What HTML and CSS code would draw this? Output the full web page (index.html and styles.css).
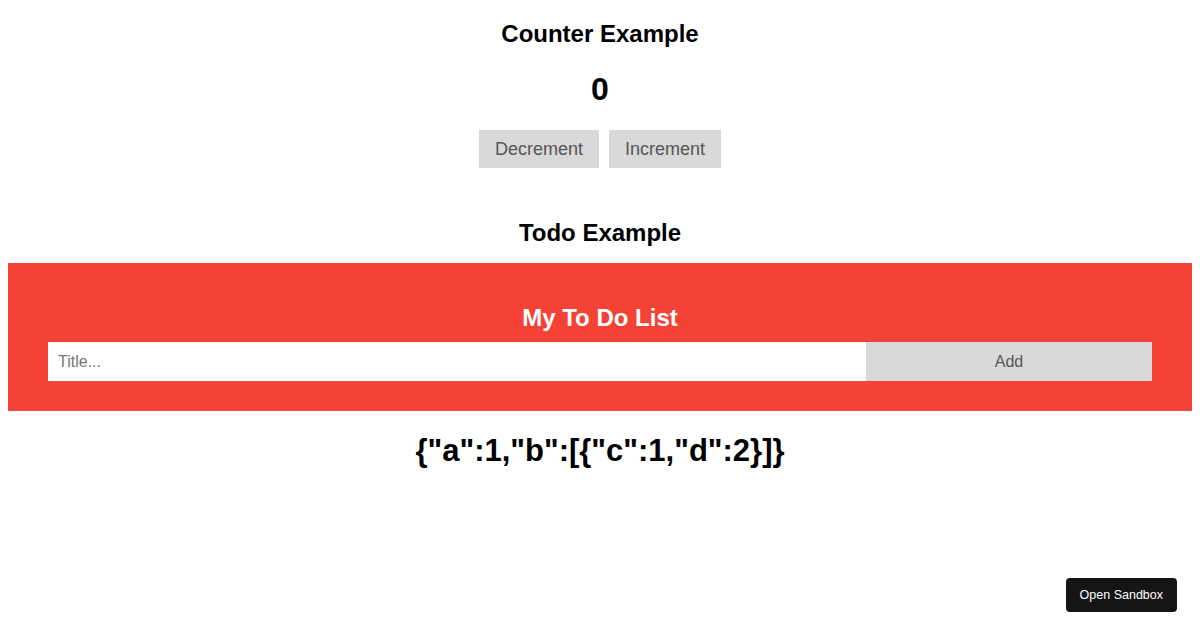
FILE: index.html
```html
<!DOCTYPE html>
<html>
<head>
<meta charset="utf-8">
<link rel="stylesheet" href="styles.css">
</head>
<body>
<div class="app">
  <h2 class="title">Counter Example</h2>
  <h1 class="count">0</h1>
  <div class="counter-btns">
    <button class="btn">Decrement</button>
    <button class="btn">Increment</button>
  </div>
  <h2 class="title todo-title">Todo Example</h2>
  <div class="header">
    <h2 class="header-title">My To Do List</h2>
    <div class="add-row">
      <input class="todo-input" type="text" placeholder="Title...">
      <span class="add-btn">Add</span>
    </div>
  </div>
  <h1 class="json">{"a":1,"b":[{"c":1,"d":2}]}</h1>
</div>
<a class="sandbox">Open Sandbox</a>
</body>
</html>
```

FILE: styles.css
```css
body {
  margin: 8px;
  font-family: "Liberation Sans", Arial, sans-serif;
  background: #fff;
  color: #000;
}
.app { text-align: center; }
.title {
  font-size: 24px;
  font-weight: bold;
  margin: 12px 0 0;
  line-height: 28px;
}
.count {
  font-size: 32px;
  margin: 23px 0 0;
  line-height: 37px;
}
.counter-btns {
  display: flex;
  justify-content: center;
  gap: 10px;
  margin-top: 22px;
}
.btn {
  font-family: "Liberation Sans", Arial, sans-serif;
  font-size: 18px;
  color: #555;
  background: #d9d9d9;
  border: none;
  padding: 0 16px;
  height: 38px;
}
.todo-title { margin-top: 51px; }
.header {
  background: #f44336;
  margin-top: 16px;
  padding: 30px 40px 30px;
  color: #fff;
}
.header-title {
  font-size: 24px;
  margin: 11px 0 10px;
  line-height: 28px;
}
.add-row {
  display: flex;
  height: 39px;
}
.todo-input {
  width: 818px;
  border: none;
  padding: 0 10px;
  box-sizing: border-box;
  font-family: "Liberation Sans", Arial, sans-serif;
  font-size: 16px;
  outline: none;
}
.todo-input::placeholder { color: #757575; }
.add-btn {
  flex: 1;
  background: #d9d9d9;
  color: #555;
  font-size: 16px;
  display: flex;
  align-items: center;
  justify-content: center;
}
.json {
  font-size: 31px;
  margin: 20px 0 0;
  line-height: 40px;
}
.sandbox {
  position: fixed;
  right: 23px;
  bottom: 18px;
  background: #151515;
  color: #fff;
  font-size: 12.5px;
  padding: 0 14px;
  height: 34px;
  line-height: 34px;
  border-radius: 4px;
  font-family: "Liberation Sans", Arial, sans-serif;
}
```
